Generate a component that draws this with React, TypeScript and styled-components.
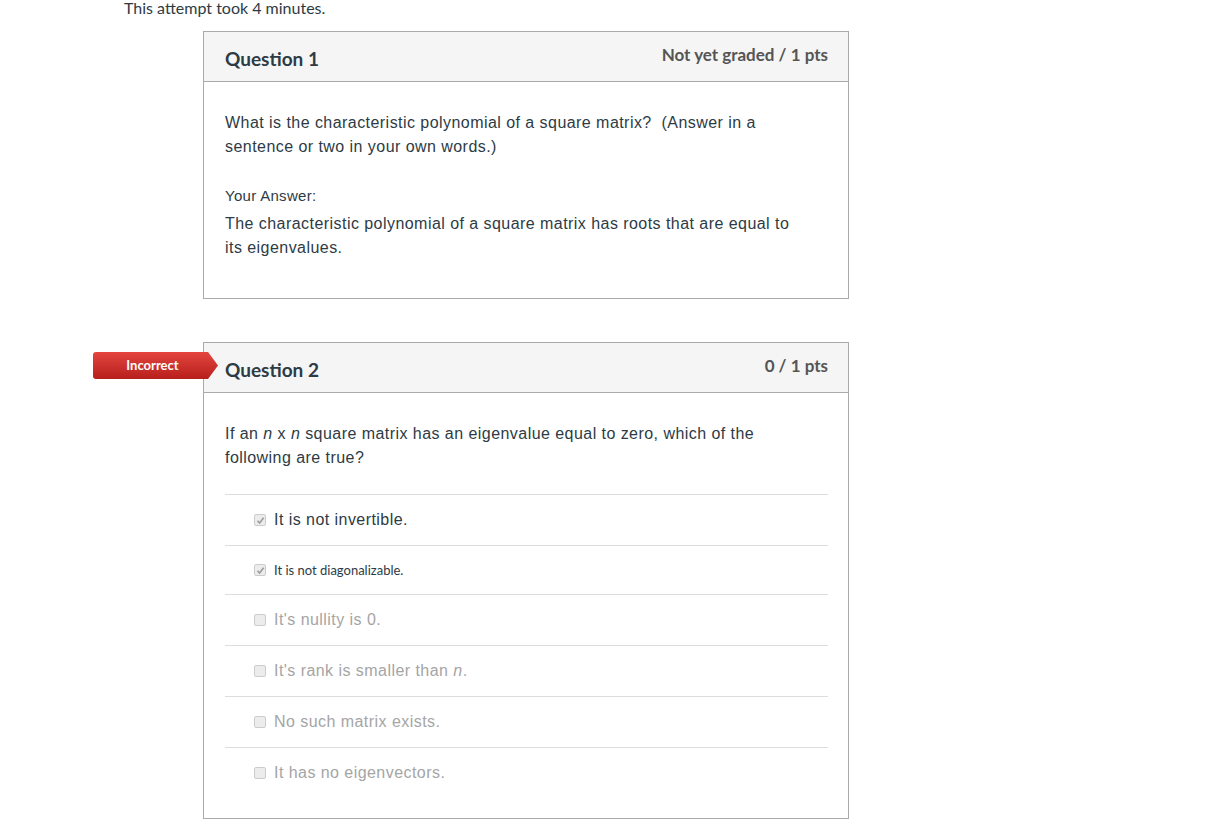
import React from 'react';
import styled, { createGlobalStyle } from 'styled-components';

const GlobalStyle = createGlobalStyle`
  body {
    margin: 0;
    background: #fff;
    color: #2d3b45;
    font-family: "Liberation Sans", Arial, sans-serif;
  }
`;

const Page = styled.div`
  padding-left: 124px;
  width: 1000px;
`;

const AttemptNote = styled.div`
  font-family: Lato, "Liberation Sans", sans-serif;
  font-size: 16px;
  line-height: 15px;
  color: #2d3b45;
  margin-bottom: 16px;
`;

const QuestionWrap = styled.div`
  position: relative;
  margin-left: 79px;
  width: 646px;
  margin-bottom: 43px;
`;

const QuestionBox = styled.div`
  border: 1px solid #aaaaaa;
  background: #fff;
`;

const Header = styled.div`
  display: flex;
  justify-content: space-between;
  align-items: flex-start;
  height: 49px;
  background: #f5f5f5;
  border-bottom: 1px solid #aaaaaa;
  padding: 0 20px 0 21px;
  font-family: Lato, "Liberation Sans", sans-serif;
`;

const Title = styled.h2`
  margin: 15px 0 0;
  font-size: 19px;
  line-height: 24px;
  font-weight: 700;
  color: #2d3b45;
`;

const Points = styled.div`
  margin-top: 11px;
  font-size: 17px;
  line-height: 24px;
  font-weight: 700;
  color: #555555;
`;

const Body = styled.div<{ $top: number; $bottom: number }>`
  padding: ${(p) => p.$top}px 20px ${(p) => p.$bottom}px 21px;
  letter-spacing: 0.45px;
`;

const Text = styled.div`
  font-size: 16px;
  line-height: 24px;
  color: #2d3b45;
  width: 582px;

  em {
    font-style: italic;
  }
`;

const AnswerLabel = styled.div`
  margin-top: 25px;
  font-size: 15px;
  line-height: 24px;
  letter-spacing: 0.3px;
  color: #2d3b45;
`;

const AnswerText = styled(Text)`
  margin-top: 4px;
`;

const Options = styled.div`
  margin-top: 24px;
  border-top: 1px solid #dddddd;
`;

const Option = styled.label<{ $chosen: boolean; $lato?: boolean }>`
  display: flex;
  align-items: center;
  height: ${(p) => (p.$lato ? '48px' : '50px')};
  padding-left: 29px;
  border-bottom: 1px solid #dddddd;
  font-family: ${(p) => (p.$lato ? 'Lato, "Liberation Sans", sans-serif' : '"Liberation Sans", Arial, sans-serif')};
  font-size: ${(p) => (p.$lato ? '13px' : '16px')};
  letter-spacing: ${(p) => (p.$lato ? '0' : '0.45px')};
  color: ${(p) => (p.$chosen ? '#2d3b45' : '#a5a5a5')};

  &:last-child {
    border-bottom: none;
  }

  em {
    font-style: italic;
  }
`;

const Box = styled.span`
  display: inline-flex;
  align-items: center;
  justify-content: center;
  flex: none;
  width: 12px;
  height: 12px;
  margin-right: 8px;
  border: 1px solid #cccccc;
  border-radius: 2px;
  background: #ececec;
  box-sizing: border-box;
`;

const Badge = styled.div`
  position: absolute;
  top: 10px;
  left: -110px;
  display: flex;
  align-items: center;
`;

const BadgeBody = styled.div`
  width: 115px;
  height: 27px;
  box-sizing: border-box;
  border-radius: 3px 0 0 3px;
  background: linear-gradient(#e4453f, #b71f1c);
  color: #fff;
  font-family: Lato, "Liberation Sans", sans-serif;
  font-weight: 700;
  font-size: 13px;
  line-height: 27px;
  text-align: center;
  padding-left: 4px;
`;

const Check = () => (
  <svg width="9" height="9" viewBox="0 0 9 9">
    <path d="M1.5 4.8 L3.6 7 L7.6 1.8" fill="none" stroke="#9a9a9a" strokeWidth="1.6" />
  </svg>
);

const CheckBox = ({ checked }: { checked: boolean }) => <Box>{checked && <Check />}</Box>;

const options: { label: React.ReactNode; chosen: boolean; lato?: boolean }[] = [
  { label: 'It is not invertible.', chosen: true },
  { label: 'It is not diagonalizable.', chosen: true, lato: true },
  { label: "It's nullity is 0.", chosen: false },
  { label: (<>It's rank is smaller than <em>n</em>.</>), chosen: false },
  { label: 'No such matrix exists.', chosen: false },
  { label: 'It has no eigenvectors.', chosen: false },
];

export default function App() {
  return (
    <>
      <GlobalStyle />
      <Page>
        <AttemptNote>This attempt took 4 minutes.</AttemptNote>

        <QuestionWrap>
          <QuestionBox>
            <Header>
              <Title>Question 1</Title>
              <Points>Not yet graded / 1 pts</Points>
            </Header>
            <Body $top={29} $bottom={38}>
              <Text>
                What is the characteristic polynomial of a square matrix?&nbsp; (Answer in a sentence or two in your own words.)
              </Text>
              <AnswerLabel>Your Answer:</AnswerLabel>
              <AnswerText>
                The characteristic polynomial of a square matrix has roots that are equal to its eigenvalues.
              </AnswerText>
            </Body>
          </QuestionBox>
        </QuestionWrap>

        <QuestionWrap>
          <Badge>
            <BadgeBody>Incorrect</BadgeBody>
            <svg width="10" height="27" viewBox="0 0 10 27">
              <defs>
                <linearGradient id="tip" x1="0" y1="0" x2="0" y2="1">
                  <stop offset="0" stopColor="#e4453f" />
                  <stop offset="1" stopColor="#b71f1c" />
                </linearGradient>
              </defs>
              <path d="M0 0 L10 13.5 L0 27 Z" fill="url(#tip)" />
            </svg>
          </Badge>
          <QuestionBox>
            <Header>
              <Title>Question 2</Title>
              <Points>0 / 1 pts</Points>
            </Header>
            <Body $top={29} $bottom={20}>
              <Text>
                If an <em>n</em> x <em>n</em> square matrix has an eigenvalue equal to zero, which of the following are true?
              </Text>
              <Options>
                {options.map((o, i) => (
                  <Option key={i} $chosen={o.chosen} $lato={o.lato}>
                    <CheckBox checked={o.chosen} />
                    <span>{o.label}</span>
                  </Option>
                ))}
              </Options>
            </Body>
          </QuestionBox>
        </QuestionWrap>
      </Page>
    </>
  );
}
